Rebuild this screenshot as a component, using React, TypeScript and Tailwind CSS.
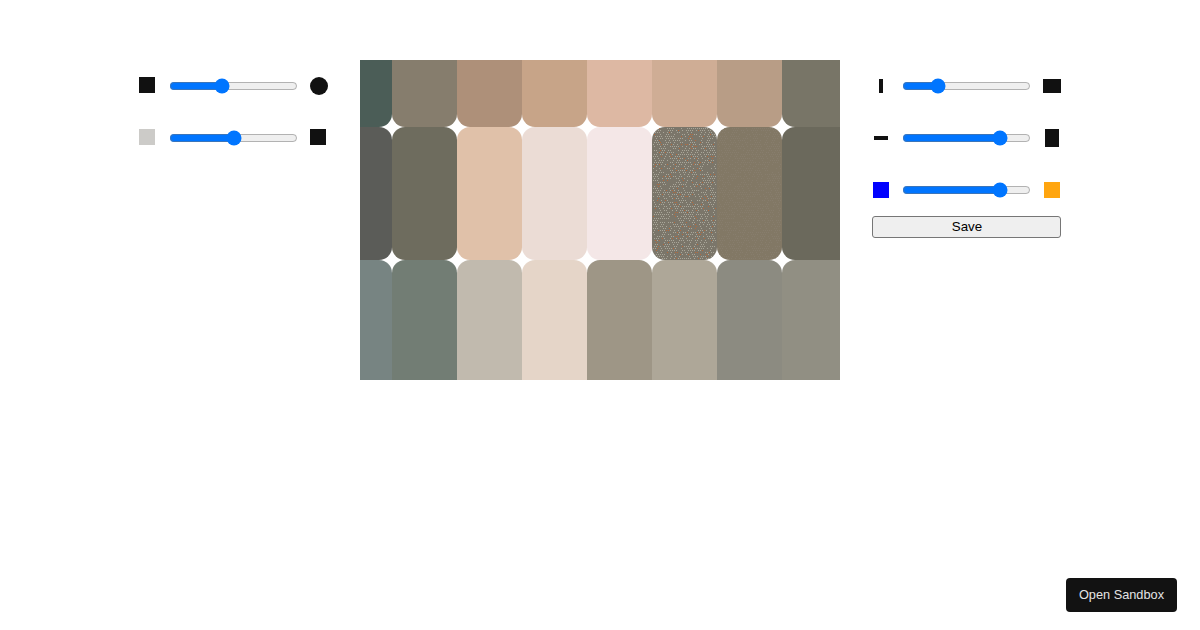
import { type FC, type ReactNode, useMemo } from 'react';

const ROWS = [
    ['#4b5d57', '#867d6d', '#ae9079', '#c7a488', '#ddb8a3', '#cfad95', '#b89d86', '#787567'],
    ['#5b5c58', '#6e6c5e', '#e0c1a9', '#ebdcd5', '#f4e7e7', '#7b766a', '#827865', '#6b695c'],
    ['#778482', '#727d74', '#c1baae', '#e5d5c8', '#9e9686', '#aea798', '#8c8b81', '#918f83'],
];

const RADIUS = [
    ['rounded-br-[13px]', 'rounded-b-[13px]', 'rounded-b-[13px]', 'rounded-b-[13px]', 'rounded-b-[13px]', 'rounded-b-[13px]', 'rounded-b-[13px]', 'rounded-bl-[13px]'],
    ['rounded-r-[13px]', 'rounded-[13px]', 'rounded-[13px]', 'rounded-[13px]', 'rounded-[13px]', 'rounded-[13px]', 'rounded-[13px]', 'rounded-l-[13px]'],
    ['rounded-tr-[13px]', 'rounded-t-[13px]', 'rounded-t-[13px]', 'rounded-t-[13px]', 'rounded-t-[13px]', 'rounded-t-[13px]', 'rounded-t-[13px]', 'rounded-tl-[13px]'],
];

// dither on the two grainy tiles
const Speckle: FC<{ light: string; accent: string }> = ({ light, accent }) => {
    const dots = useMemo(() => {
        const out: { x: number; y: number; c: string }[] = [];
        let seed = 11;
        for (let y = 1; y < 133; y += 2) {
            for (let x = 1 + ((y - 1) / 2) % 2; x < 64; x += 2) {
                seed = (seed * 16807) % 2147483647;
                const r = seed % 100;
                if (r < 9) out.push({ x, y, c: accent });
                else if (r < 58) out.push({ x, y, c: light });
            }
        }
        return out;
    }, [light, accent]);

    return (
        <svg className="block h-full w-full" viewBox="0 0 65 133.33">
            {dots.map((d, i) => (
                <rect key={i} x={d.x} y={d.y} width="1" height="1" fill={d.c} />
            ))}
        </svg>
    );
};

const Slot: FC<{ start?: boolean; children: ReactNode }> = ({ start, children }) => (
    <div className={`flex h-[18px] w-[18px] shrink-0 ${start ? 'items-start justify-start' : 'items-center justify-center'}`}>
        {children}
    </div>
);

const SliderRow: FC<{ value: number; start?: boolean; left: ReactNode; right: ReactNode }> = ({ value, start, left, right }) => (
    <div className="flex h-[52px] w-full items-center justify-between">
        <Slot start={start}>{left}</Slot>
        <input type="range" min={0} max={100} defaultValue={value} />
        <Slot start={start}>{right}</Slot>
    </div>
);

export default function App() {
    return (
        <div className="relative h-[630px] w-[1200px] overflow-hidden bg-white font-['Liberation_Sans',Arial,sans-serif]">
            <div className="flex items-start justify-center gap-8 pt-[60px]">
                {/* Left controls */}
                <div className="w-[189px]">
                    <SliderRow
                        value={40}
                        start
                        left={<div className="h-4 w-4 bg-[#111111]" />}
                        right={<div className="h-[18px] w-[18px] rounded-full bg-[#111111]" />}
                    />
                    <SliderRow
                        value={50}
                        start
                        left={<div className="h-4 w-4 bg-[#cccbc8]" />}
                        right={<div className="h-4 w-4 bg-[#111111]" />}
                    />
                </div>

                {/* Tile preview */}
                <div className="grid h-80 w-[480px] grid-cols-[32.4px_repeat(6,65px)_57.6px] grid-rows-[66.67px_133.33px_120px] overflow-hidden">
                    {ROWS.map((row, r) =>
                        row.map((color, c) => (
                            <div key={`${r}-${c}`} className={`overflow-hidden ${RADIUS[r][c]}`} style={{ backgroundColor: color }}>
                                {r === 1 && c === 5 && <Speckle light="#a9a699" accent="#b5693c" />}
                                {r === 1 && c === 6 && <Speckle light="#877d6d" accent="#877d6d" />}
                            </div>
                        )),
                    )}
                </div>

                {/* Right controls */}
                <div className="w-[189px]">
                    <SliderRow
                        value={25}
                        left={<div className="h-[14px] w-[4px] bg-[#111111]" />}
                        right={<div className="h-[14px] w-[18px] bg-[#111111]" />}
                    />
                    <SliderRow
                        value={80}
                        left={<div className="h-[4px] w-[14px] bg-[#111111]" />}
                        right={<div className="h-[18px] w-[14px] bg-[#111111]" />}
                    />
                    <SliderRow
                        value={80}
                        left={<div className="h-4 w-4 bg-[#0000ff]" />}
                        right={<div className="h-4 w-4 bg-[#ffa50f]" />}
                    />
                    <button
                        type="button"
                        className="block h-[22px] w-full rounded-[3px] border border-[#767676] bg-[#efefef] pl-[1px] text-center text-[13.33px] leading-none text-black"
                    >
                        Save
                    </button>
                </div>
            </div>

            <button
                type="button"
                className="absolute bottom-[18px] right-[23px] h-[34px] w-[111px] rounded-[4px] bg-[#121212] bg-[radial-gradient(#2a2a2a_0.5px,transparent_0.6px)] bg-[length:4px_4px] text-center text-[12.75px] text-[#e4e4e4]"
            >
                Open Sandbox
            </button>
        </div>
    );
}
